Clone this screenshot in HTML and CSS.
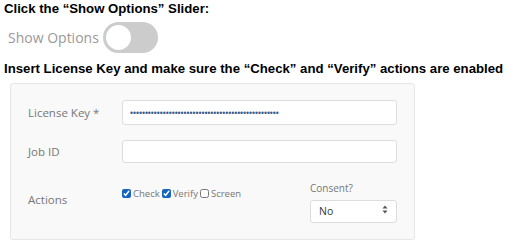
FILE: index.html
```html
<!DOCTYPE html>
<html lang="en">
<head>
  <meta charset="UTF-8" />
  <title>License Key Setup</title>
  <link rel="stylesheet" href="styles.css">
</head>
<body>

  <h1 class="step">Click the “Show Options” Slider:</h1>
  <div class="toggle-row">
    <span class="toggle-label">Show Options</span>
    <span class="switch"><span class="knob"></span></span>
  </div>

  <h1 class="step step-two">Insert License Key and make sure the “Check” and “Verify” actions are enabled</h1>

  <div class="panel">
    <div class="form-row">
      <label class="field-label">License Key *</label>
      <input class="field" type="password" value="ssssssssssssssssssssssssssssssssssssssssssssssssss" />
    </div>
    <div class="form-row">
      <label class="field-label">Job ID</label>
      <input class="field field-short" type="text" />
    </div>
    <div class="form-row actions-row">
      <label class="field-label">Actions</label>
      <div class="checks">
        <label><input type="checkbox" checked /> Check</label>
        <label><input type="checkbox" checked /> Verify</label>
        <label><input type="checkbox" /> Screen</label>
      </div>
      <div class="consent">
        <div class="consent-label">Consent?</div>
        <div class="select-wrap">
          <select class="select">
            <option>No</option>
            <option>Yes</option>
          </select>
          <svg class="arrows" width="6" height="9" viewBox="0 0 6 9">
            <path d="M3 0.5 L5.5 3.5 L0.5 3.5 Z M3 8.5 L5.5 5.5 L0.5 5.5 Z" fill="#555" />
          </svg>
        </div>
      </div>
    </div>
  </div>

</body>
</html>
```

FILE: styles.css
```css
body {
  margin: 0;
  padding: 2px 4px;
  background: #fff;
  font-family: "Open Sans", sans-serif;
}

.step {
  font-family: "Liberation Sans", Arial, sans-serif;
  font-size: 13.2px;
  font-weight: bold;
  line-height: 14px;
  color: #000;
  margin: 0;
}

.step-two {
  margin-top: 9px;
}

.toggle-row {
  display: flex;
  align-items: center;
  gap: 4px;
  margin: 5px 0 0 4px;
  height: 32px;
}

.toggle-label {
  font-size: 14px;
  color: #999;
}

.switch {
  width: 55px;
  height: 31px;
  border-radius: 16px;
  background: #ccc;
  display: flex;
  align-items: center;
  padding-left: 3px;
  box-sizing: border-box;
}

.knob {
  width: 25px;
  height: 25px;
  border-radius: 50%;
  background: #fff;
}

.panel {
  margin: 7px 0 0 6px;
  width: 405px;
  height: 157px;
  box-sizing: border-box;
  background: #f9f9f9;
  border: 1px solid #e6e6e6;
  border-radius: 3px;
  padding: 16px 17px 0 17px;
}

.form-row {
  display: flex;
  align-items: center;
  margin-bottom: 15px;
}

.field-label {
  width: 94px;
  font-size: 11.5px;
  color: #777;
}

.field {
  width: 275px;
  height: 25px;
  box-sizing: border-box;
  border: 1px solid #ddd;
  border-radius: 3px;
  background: #fff;
  padding: 0 7px;
  font-size: 8.5px;
  color: #3a5a8a;
  outline: none;
}

.field-short {
  height: 23px;
}

.actions-row {
  margin-top: 18px;
  align-items: flex-start;
}

.actions-row .field-label {
  margin-top: 11px;
}

.checks {
  display: flex;
  gap: 2px;
  width: 188px;
  font-size: 9.5px;
  color: #777;
  margin-top: 6px;
}

.checks label {
  display: flex;
  align-items: center;
  gap: 2px;
}

.checks input {
  width: 9px;
  height: 9px;
  margin: 0;
  accent-color: #1565c0;
}

.consent-label {
  font-size: 10px;
  color: #777;
  margin-bottom: 3px;
}

.select-wrap {
  position: relative;
  width: 87px;
}

.select {
  appearance: none;
  width: 87px;
  height: 23px;
  box-sizing: border-box;
  border: 1px solid #ddd;
  border-radius: 3px;
  background: #fff;
  padding: 0 8px;
  font-family: "Open Sans", sans-serif;
  font-size: 10.5px;
  color: #333;
}

.arrows {
  position: absolute;
  right: 9px;
  top: 7px;
}
```
